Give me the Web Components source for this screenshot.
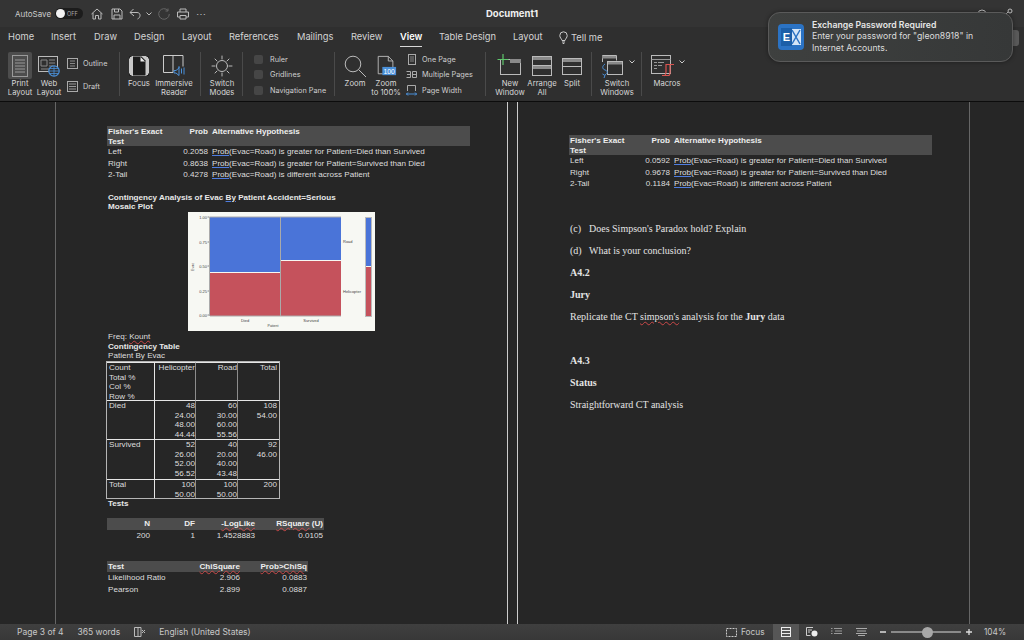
<!DOCTYPE html>
<html>
<head>
<meta charset="utf-8">
<title>Document1</title>
<style>
  html, body { margin: 0; height: 100%; overflow: hidden; background: #262626; }
  body { font-family: Inter, "Liberation Sans", sans-serif; color: #ddd; }
  word-app { width: 1024px; height: 640px; }
</style>
</head>
<body>
<word-app>
  <word-titlebar title-text="Document1"></word-titlebar>
  <word-tabs></word-tabs>
  <word-ribbon>
    <ribbon-group style="width:120px;padding-left:8px">
      <ribbon-btn w="24" active label="Print|Layout"><svg width="20" height="24" viewBox="0 0 20 24" fill="none" stroke="#9a9a9a"><rect x="2.5" y="1.5" width="15" height="21"/><path d="M5 6h10M5 9h10M5 12h10M5 15h10M5 18h10"/></svg></ribbon-btn>
      <ribbon-btn w="34" label="Web|Layout"><svg width="26" height="24" viewBox="0 0 26 24" fill="none" stroke="#bbb"><rect x="2.5" y="2.5" width="19" height="15"/><path d="M5 6h6v6H5zM13 6h6M13 9h6M13 12h4M5 15h8" stroke="#888"/><circle cx="18" cy="17" r="5.2" fill="#2f2f2f" stroke="#4a90d9" stroke-width="1.2"/><path d="M12.8 17h10.4M18 11.8v10.4M14 14.5h8M14 19.5h8" stroke="#4a90d9" stroke-width=".8"/></svg></ribbon-btn>
      <ribbon-stack gap="13" top="6" style="margin-left:1px">
        <ribbon-item label="Outline"><svg width="11" height="11" viewBox="0 0 11 11" fill="none" stroke="#aaa"><rect x=".5" y=".5" width="10" height="10"/><path d="M3 3h5M3 5.5h5M3 8h5" stroke="#888"/></svg></ribbon-item>
        <ribbon-item label="Draft"><svg width="11" height="11" viewBox="0 0 11 11" fill="none" stroke="#aaa"><rect x=".5" y=".5" width="10" height="10"/><path d="M2 3h7M2 5.5h7M2 8h7" stroke="#999"/></svg></ribbon-item>
      </ribbon-stack>
    </ribbon-group>
    <ribbon-group style="width:81px;padding-left:1px">
      <ribbon-btn w="36" label="Focus"><svg width="22" height="22" viewBox="0 0 22 22"><rect x="1" y="1" width="20" height="20" fill="#c8c8c8"/><path d="M5 1.500h8.500l4 4V20.500H5z" fill="#1d1d1d"/><path d="M12.500 2v4.500H17z" fill="#eee"/><path d="M1 1h2.500v1H2v1.500H1zM18.500 1H21v2.500h-1V2h-1.500zM1 18.500h1V20h1.500v1H1zM20 18.500h1V21h-2.500v-1H20z" fill="#222"/></svg></ribbon-btn>
      <ribbon-btn w="34" label="Immersive|Reader"><svg width="26" height="24" viewBox="0 0 26 24" fill="none" stroke="#ccc"><path d="M12 18.500H2.500V1.500h9.500zM12 1.500h10v11"/><path d="M15 16.500l3-2.500v-1.500 9l-3-2.500h-2v-2.500z" stroke="#4a90d9"/><path d="M20.500 14.500v5M23 13.500v7" stroke="#4a90d9"/></svg></ribbon-btn>
    </ribbon-group>
    <ribbon-group style="width:42px">
      <ribbon-btn w="42" label="Switch|Modes"><svg width="24" height="24" viewBox="0 0 24 24" fill="none" stroke="#bbb" stroke-linecap="round"><circle cx="12" cy="12" r="5.500"/><path d="M12 2v3M12 19v3M2 12h3M19 12h3M5 5l2 2M17 17l2 2M19 5l-2 2M7 17l-2 2"/></svg></ribbon-btn>
    </ribbon-group>
    <ribbon-group style="width:92px;padding-left:11px">
      <ribbon-stack gap="5.500" top="2">
        <ribbon-item check label="Ruler"></ribbon-item>
        <ribbon-item check label="Gridlines"></ribbon-item>
        <ribbon-item check label="Navigation Pane"></ribbon-item>
      </ribbon-stack>
    </ribbon-group>
    <ribbon-group style="width:151px">
      <ribbon-btn w="40" label="Zoom"><svg width="24" height="24" viewBox="0 0 24 24" fill="none" stroke="#bbb"><circle cx="10" cy="10" r="7.800"/><path d="M15.500 15.500l7.500 7.500"/></svg></ribbon-btn>
      <ribbon-btn w="22" label="Zoom|to 100%"><svg width="24" height="24" viewBox="0 0 24 24" fill="none" stroke="#bbb"><path d="M3.500 20.500V1.500h11l5 5v7M14.500 1.500v5h5M3.500 20.500h5"/><rect x="8" y="13" width="15" height="9" fill="#4a90d9" stroke="none"/><text x="15.500" y="20.500" fill="#fff" stroke="none" font-family="Liberation Sans" font-size="7.500" text-anchor="middle">100</text></svg></ribbon-btn>
      <ribbon-stack gap="5.500" top="2" style="margin-left:9px">
        <ribbon-item label="One Page"><svg width="10" height="11" viewBox="0 0 10 11" fill="none" stroke="#aaa"><rect x="1.500" y=".5" width="7" height="10"/><path d="M3 3h4M3 5h4M3 7h4" stroke="#888"/></svg></ribbon-item>
        <ribbon-item label="Multiple Pages"><svg width="11" height="9" viewBox="0 0 11 9" fill="none" stroke="#aaa"><path d="M.5 1.500h4v6h-4M6.500 1.500h4v6h-4zM1 4.500h3M7 4.500h3" /></svg></ribbon-item>
        <ribbon-item label="Page Width"><svg width="11" height="11" viewBox="0 0 11 11" fill="none"><path d="M1.500 6V.5h8V6" stroke="#aaa"/><path d="M0 9h11M2 7.500L.5 9 2 10.500M9 7.500L10.500 9 9 10.500" stroke="#4a90d9"/></svg></ribbon-item>
      </ribbon-stack>
    </ribbon-group>
    <ribbon-group style="width:106px;padding-left:8px">
      <ribbon-btn w="32" label="New|Window"><svg width="26" height="24" viewBox="0 0 26 24" fill="none"><rect x="3.500" y="5.500" width="20" height="15" stroke="#bbb"/><rect x="13" y="5" width="11" height="4" fill="#8a8a8a"/><path d="M6 0v11M.5 5.500h11" stroke="#5fc76d" stroke-width="1.200"/></svg></ribbon-btn>
      <ribbon-btn w="32" label="Arrange|All"><svg width="22" height="24" viewBox="0 0 22 24" fill="none" stroke="#bbb"><rect x="1.500" y="2.500" width="19" height="19"/><rect x="2" y="3" width="18" height="3" fill="#8a8a8a" stroke="none"/><rect x="2" y="12" width="18" height="3" fill="#8a8a8a" stroke="none"/><path d="M1.500 11.500h19"/></svg></ribbon-btn>
      <ribbon-btn w="28" label="Split"><svg width="22" height="24" viewBox="0 0 22 24" fill="none" stroke="#bbb"><rect x="1.500" y="4.500" width="19" height="16"/><rect x="2" y="5" width="18" height="3" fill="#8a8a8a" stroke="none"/><path d="M1.500 12.500h19"/></svg></ribbon-btn>
    </ribbon-group>
    <ribbon-group style="width:50px">
      <ribbon-btn w="50" caret label="Switch|Windows"><svg width="26" height="24" viewBox="0 0 26 24" fill="none" stroke="#bbb"><path d="M2.500 8V1.500h14v5"/><rect x="2" y="2" width="14" height="2.500" fill="#8a8a8a" stroke="none"/><rect x="7.500" y="7.500" width="15" height="13"/><rect x="8" y="8" width="14" height="2.500" fill="#8a8a8a" stroke="none"/><path d="M4 12c-3 2-3 5 0 6s3 3 0 5M1.500 22l2.500 1.500-1 2.500" stroke="#4a90d9" transform="translate(1 -2)"/></svg></ribbon-btn>
    </ribbon-group>
    <ribbon-group style="width:50px;border:none">
      <ribbon-btn w="50" caret label="Macros"><svg width="26" height="24" viewBox="0 0 26 24" fill="none" stroke="#bbb"><rect x="1.500" y="1.500" width="19" height="18"/><path d="M1.500 5.500h19M4 8.500h3M8 8.500h6M4 11.500h3M8 11.500h4M4 14.500h3" stroke="#999"/><path d="M12 21.500h7c1-1 1-2 1-3V10.500h4M15 21c1-1 1-2 1-3v-7.500h5" stroke="#d9534f" stroke-width="1.200"/></svg></ribbon-btn>
    </ribbon-group>
  </word-ribbon>
  <word-document>
    <doc-page side="left" style="padding-top:24px">
      <stat-table style="--cols:71px 31px 1fr;--row:11.500px">
        <span class="h">Fisher's Exact<br>Test</span><span class="h r">Prob</span><span class="h alt">Alternative Hypothesis</span>
        <span>Left</span><span class="r">0.2058</span><span class="alt"><spell-mark kind="grammar">Prob</spell-mark>(Evac=Road) is greater for Patient=Died than Survived</span>
        <span>Right</span><span class="r">0.8638</span><span class="alt"><spell-mark kind="grammar">Prob</spell-mark>(Evac=Road) is greater for Patient=Survived than Died</span>
        <span>2-Tail</span><span class="r">0.4278</span><span class="alt"><spell-mark kind="grammar">Prob</spell-mark>(Evac=Road) is different across Patient</span>
      </stat-table>
      <report-text bold style="margin-top:12px">Contingency Analysis of Evac <spell-mark kind="grammar">By</spell-mark> Patient Accident=Serious</report-text>
      <report-text bold>Mosaic Plot</report-text>
      <mosaic-plot></mosaic-plot>
      <report-text style="margin-top:1px">Freq: <spell-mark kind="spell">Kount</spell-mark></report-text>
      <report-text bold>Contingency Table</report-text>
      <report-text>Patient By Evac</report-text>
      <cross-table>
        <span class="a">Count<br>Total %<br>Col %<br>Row %</span><span class="r">Helicopter</span><span class="r">Road</span><span class="r e">Total</span>
        <span class="a">Died</span><span class="r">48<br>24.00<br>48.00<br>44.44</span><span class="r">60<br>30.00<br>60.00<br>55.56</span><span class="r e">108<br>54.00</span>
        <span class="a">Survived</span><span class="r">52<br>26.00<br>52.00<br>56.52</span><span class="r">40<br>20.00<br>40.00<br>43.48</span><span class="r e">92<br>46.00</span>
        <span class="a">Total</span><span class="r">100<br>50.00</span><span class="r">100<br>50.00</span><span class="r e">200</span>
      </cross-table>
      <report-text bold>Tests</report-text>
      <stat-table style="--cols:44px 45px 60px 68px;--row:12px;width:217px;margin-top:9px">
        <span class="h r c">N</span><span class="h r c">DF</span><span class="h r c"><spell-mark kind="spell">-LogLike</spell-mark></span><span class="h r c"><spell-mark kind="spell">RSquare</spell-mark> (U)</span>
        <span class="r c">200</span><span class="r c">1</span><span class="r c">1.4528883</span><span class="r c">0.0105</span>
      </stat-table>
      <stat-table style="--cols:70px 64px 67px;--row:11.500px;width:201px;margin-top:19px">
        <span class="h c">Test</span><span class="h r c"><spell-mark kind="spell">ChiSquare</spell-mark></span><span class="h r c"><spell-mark kind="spell">Prob&gt;ChiSq</spell-mark></span>
        <span class="c">Likelihood Ratio</span><span class="r c">2.906</span><span class="r c">0.0883</span>
        <span class="c">Pearson</span><span class="r c">2.899</span><span class="r c">0.0887</span>
      </stat-table>
    </doc-page>
    <doc-page side="right" style="padding-top:33px">
      <stat-table style="--cols:71px 31px 1fr;--row:11.500px">
        <span class="h">Fisher's Exact<br>Test</span><span class="h r">Prob</span><span class="h alt">Alternative Hypothesis</span>
        <span>Left</span><span class="r">0.0592</span><span class="alt"><spell-mark kind="grammar">Prob</spell-mark>(Evac=Road) is greater for Patient=Died than Survived</span>
        <span>Right</span><span class="r">0.9678</span><span class="alt"><spell-mark kind="grammar">Prob</spell-mark>(Evac=Road) is greater for Patient=Survived than Died</span>
        <span>2-Tail</span><span class="r">0.1184</span><span class="alt"><spell-mark kind="grammar">Prob</spell-mark>(Evac=Road) is different across Patient</span>
      </stat-table>
      <body-para marker="(c)" style="margin-top:28px">Does Simpson's Paradox hold? Explain</body-para>
      <body-para marker="(d)">What is your conclusion?</body-para>
      <body-para bold>A4.2</body-para>
      <body-para bold>Jury</body-para>
      <body-para>Replicate the CT <spell-mark kind="spell">simpson's</spell-mark> analysis for the <b>Jury</b> data</body-para>
      <body-para></body-para>
      <body-para bold>A4.3</body-para>
      <body-para bold>Status</body-para>
      <body-para>Straightforward CT analysis</body-para>
    </doc-page>
  </word-document>
  <word-status></word-status>
  <notify-toast heading="Exchange Password Required">Enter your password for "gleon8918" in<br>Internet Accounts.</notify-toast>
</word-app>

<script>
function shadowed(name, html) {
  customElements.define(name, class extends HTMLElement {
    constructor() {
      super();
      this.attachShadow({ mode: 'open' }).innerHTML = html;
    }
  });
}

shadowed('word-app', `<style>:host{display:flex;flex-direction:column;position:relative;overflow:hidden}</style><slot></slot>`);

class WordTitlebar extends HTMLElement {
  constructor() {
    super();
    this.attachShadow({ mode: 'open' }).innerHTML = `
      <style>
        :host { display: flex; align-items: center; height: 27px; background: #343434; padding-left: 15px; position: relative; flex: none; }
        .auto { font-size: 8px; color: #ccc; width: 40px; }
        .toggle { width: 28px; height: 11px; border-radius: 6px; background: #1c1c1c; display: flex; align-items: center; }
        .toggle i { width: 9px; height: 9px; border-radius: 50%; background: #f2f2f2; margin-left: 1px; }
        .toggle span { font-size: 5.500px; color: #aaa; margin-left: 2px; }
        .qa { display: flex; align-items: center; margin-left: 8px; }
        .title { position: absolute; left: 0; right: 0; top: 0; line-height: 27px; text-align: center; font-size: 9.500px; font-weight: 700; color: #f0f0f0; }
        .more { color: #bbb; font-size: 10px; margin-left: 7px; }
        .right { position: absolute; left: 976px; top: 8px; display: flex; gap: 14px; }
      </style>
      <span class="auto">AutoSave</span>
      <div class="toggle"><i></i><span>OFF</span></div>
      <div class="qa">
        <svg width="12" height="12" viewBox="0 0 12 12" fill="none" stroke="#bbb"><path d="M.5 6L6 1l5.500 5M2 5v6h2.500V7.500h3V11H10V5"/></svg>
        <svg width="12" height="12" viewBox="0 0 12 12" fill="none" stroke="#bbb" style="margin-left:8px"><path d="M1 1h8l2 2v8H1zM3.500 1v3h4V1M3 11V7h6v4"/></svg>
        <svg width="13" height="12" viewBox="0 0 13 12" fill="none" stroke="#bbb" style="margin-left:6px"><path d="M1 4.500h7c4 0 4 5 .5 6.500M1 4.500L4.500 1M1 4.500L5 8"/></svg>
        <svg width="6" height="4" viewBox="0 0 6 4" fill="none" stroke="#bbb" style="margin-left:4px"><path d="M.5.5L3 3 5.500.5"/></svg>
        <svg width="12" height="12" viewBox="0 0 12 12" fill="none" stroke="#666" style="margin-left:6px"><path d="M10 2.500A5.300 5.300 0 1 0 11.300 6M10 .5v2.500H7.500"/></svg>
        <svg width="12" height="12" viewBox="0 0 12 12" fill="none" stroke="#bbb" style="margin-left:7px"><path d="M3 4V1h6v3M3 9H.5V4h11v5H9M3 7.500h6V11H3z"/></svg>
        <span class="more">&#8943;</span>
      </div>
      <div class="title">${this.getAttribute('title-text')}</div>
      <div class="right">
        <svg width="12" height="12" viewBox="0 0 12 12" fill="none" stroke="#bbb"><circle cx="6" cy="6" r="4"/></svg>
        <svg width="12" height="12" viewBox="0 0 12 12" fill="none" stroke="#bbb"><circle cx="8" cy="3" r="2"/><circle cx="3" cy="8" r="2"/><path d="M6 4l-2 2"/></svg>
      </div>`;
  }
}
customElements.define('word-titlebar', WordTitlebar);

class WordTabs extends HTMLElement {
  constructor() {
    super();
    // left edge of each tab
    const tabs = [['Home',8],['Insert',51],['Draw',94],['Design',134],['Layout',182],['References',229],['Mailings',297],['Review',351],['View',400],['Table Design',439],['Layout',513]];
    const html = tabs.map(([t, x], i) => {
      const next = i < tabs.length - 1 ? tabs[i + 1][1] : 559;
      return `<a class="${t === 'View' ? 'on' : ''}" style="width:${next - x}px"><span>${t}</span></a>`;
    }).join('');
    this.attachShadow({ mode: 'open' }).innerHTML = `
      <style>
        :host { display: flex; height: 23px; background: #2f2f2f; padding-left: 8px; font-size: 9.300px; color: #d4d4d4; flex: none; position: relative; }
        a { display: block; flex: none; }
        a span { display: inline-block; line-height: 20px; height: 20px; box-sizing: border-box; }
        a.on span { color: #fff; font-weight: 600; border-bottom: 1.500px solid #d8d8d8; }
        .tell { display: flex; align-items: center; gap: 3px; height: 20px; }
        .share { position: absolute; left: 1005px; top: 3px; width: 14px; height: 16px; border-radius: 3px; background: #5a5a5a; }
      </style>
      ${html}
      <div class="tell"><svg width="9" height="13" viewBox="0 0 9 13" fill="none" stroke="#ccc"><path d="M3 9.500C2.500 7.500.8 6.800.8 4.500a3.700 3.700 0 0 1 7.400 0c0 2.300-1.700 3-2.200 5zM3 11h3M3.700 12.500h1.600"/></svg><span>Tell me</span></div>
      <div class="share"></div>`;
  }
}
customElements.define('word-tabs', WordTabs);

shadowed('word-ribbon', `<style>:host{display:flex;background:#2f2f2f;border-bottom:1px solid #0c0c0c;box-sizing:border-box;flex:none;height:52px}</style><slot></slot>`);

shadowed('ribbon-group', `<style>:host{display:flex;box-sizing:border-box;flex:none;border-right:1px solid #4a4a4a;height:44px;margin-top:2px;align-items:flex-start}</style><slot></slot>`);

class RibbonBtn extends HTMLElement {
  constructor() {
    super();
    const lines = this.getAttribute('label').split('|').join('<br>');
    const caret = this.hasAttribute('caret')
      ? `<svg class="caret" width="6" height="4" viewBox="0 0 6 4" fill="none" stroke="#ccc"><path d="M.5.5L3 3 5.500.5"/></svg>` : '';
    this.attachShadow({ mode: 'open' }).innerHTML = `
      <style>
        :host { display: flex; flex-direction: column; align-items: center; flex: none; width: ${this.getAttribute('w')}px; height: 46px; }
        .icon { height: 27px; width: 100%; display: flex; align-items: center; justify-content: center; gap: 3px; }
        :host([active]) .icon { background: #4d4d4d; border-radius: 2px; }
        .lbl { font-size: 7.700px; line-height: 9px; text-align: center; white-space: nowrap; color: #d8d8d8; }
        .caret { margin-bottom: 8px; }
      </style>
      <div class="icon"><slot></slot>${caret}</div>
      <div class="lbl">${lines}</div>`;
  }
}
customElements.define('ribbon-btn', RibbonBtn);

class RibbonStack extends HTMLElement {
  constructor() {
    super();
    this.attachShadow({ mode: 'open' }).innerHTML = `<style>:host{display:flex;flex-direction:column;gap:${this.getAttribute('gap')}px;padding-top:${this.getAttribute('top')}px;flex:none}</style><slot></slot>`;
  }
}
customElements.define('ribbon-stack', RibbonStack);

class RibbonItem extends HTMLElement {
  constructor() {
    super();
    const box = this.hasAttribute('check') ? '<i></i>' : '<span class="ic"><slot></slot></span>';
    this.attachShadow({ mode: 'open' }).innerHTML = `
      <style>
        :host { display: flex; align-items: center; height: 10px; font-size: 7.300px; color: #d0d0d0; white-space: nowrap; }
        i { width: 9px; height: 9px; border-radius: 2px; background: #464646; margin-right: 7px; }
        .ic { width: 11px; height: 11px; display: flex; align-items: center; justify-content: center; margin-right: 5px; }
      </style>
      ${box}<span>${this.getAttribute('label')}</span>`;
  }
}
customElements.define('ribbon-item', RibbonItem);

shadowed('word-document', `<style>:host{display:flex;flex:1;min-height:0;gap:9px;padding-left:55px;background:#262626;overflow:hidden}</style><slot></slot>`);

shadowed('doc-page', `<style>
  :host { display: block; box-sizing: border-box; width: 453px; height: 100%; padding: 0 37px 0 51px; font-family: "Liberation Sans", Arial, sans-serif; font-size: 8.100px; color: #dedede; }
  :host([side=left]) { border-left: 1px solid #666; border-right: 1px solid #ccc; }
  :host([side=right]) { border-left: 1px solid #ccc; border-right: 1px solid #666; }
</style><slot></slot>`);

shadowed('spell-mark', `<style>
  :host { text-decoration: underline; text-underline-offset: 1px; }
  :host([kind=grammar]) { text-decoration-color: #4f7de0; text-decoration-thickness: 1px; }
  :host([kind=spell]) { text-decoration: underline wavy #c94848; text-decoration-thickness: .7px; }
</style><slot></slot>`);

shadowed('stat-table', `<style>
  :host { display: grid; grid-template-columns: var(--cols); width: 363px; }
  ::slotted(*) { padding: 1px 1px 0; line-height: 10.500px; min-height: var(--row); box-sizing: border-box; white-space: nowrap; }
  ::slotted(.h) { background: #4c4c4c; font-weight: 700; padding-top: 1px; line-height: 9.500px; color: #eee; }
  ::slotted(.r) { text-align: right; }
  ::slotted(.c) { line-height: 11.500px; padding-top: 0; }
  ::slotted(.alt) { padding-left: 3px; }
</style><slot></slot>`);

shadowed('report-text', `<style>
  :host { display: block; line-height: 9.700px; padding-left: 1px; white-space: nowrap; }
  :host([bold]) { font-weight: 700; color: #e8e8e8; }
</style><slot></slot>`);

shadowed('cross-table', `<style>
  :host { display: grid; grid-template-columns: 48px 41px 42px 41px; grid-template-rows: 38px 39px 40px 19px; width: 174px; box-sizing: border-box; margin-left: -1px; border: 1px solid #b5b5b5; line-height: 9.700px; }
  ::slotted(*) { padding: 0 0 0 2px; border-right: 1px solid #8c8c8c; border-top: 1px solid #e6e6e6; white-space: nowrap; }
  ::slotted(.a) { border-right: 1px solid #e6e6e6; }
  ::slotted(.r) { text-align: right; }
  ::slotted(.e) { border-right: none; padding-right: 2px; }
</style><slot></slot>`);

class MosaicPlot extends HTMLElement {
  constructor() {
    super();
    const ticks = [['1.00', 216], ['0.75', 241], ['0.50', 265], ['0.25', 290], ['0.00', 314]];
    const labels = ticks.map(([t, y]) => `<text x="19" y="${y - 211 + 1.500}" text-anchor="end">${t}</text><path d="M19.500 ${y - 211}h2" stroke="#888"/>`).join('');
    this.attachShadow({ mode: 'open' }).innerHTML = `
      <style>:host { display: block; width: 187px; height: 119px; margin-left: 81px; } svg { display: block; }</style>
      <svg width="187" height="119" viewBox="0 0 187 119" font-family="Liberation Sans" font-size="4" fill="#444">
        <rect width="187" height="119" fill="#f7f8f3"/>
        ${labels}
        <rect x="22" y="5" width="70" height="55" fill="#4a74d8"/>
        <rect x="22" y="61" width="70" height="43" fill="#c5525c"/>
        <rect x="93" y="5" width="60" height="43" fill="#4a74d8"/>
        <rect x="93" y="49" width="60" height="55" fill="#c5525c"/>
        <path d="M22 5h131M22 104h131M21.500 5v99M92.500 5v99" stroke="#aaa" fill="none"/>
        <text x="57" y="110" text-anchor="middle">Died</text>
        <text x="123" y="110" text-anchor="middle">Survived</text>
        <text x="85" y="115" text-anchor="middle" font-size="3.500">Patient</text>
        <text x="155" y="31">Road</text>
        <text x="155" y="80.500">Helicopter</text>
        <text transform="translate(6 55) rotate(-90)" text-anchor="middle" font-size="3.500">Evac</text>
        <rect x="177.500" y="5.500" width="6" height="99" fill="none" stroke="#bbb"/>
        <rect x="178" y="6" width="5" height="48" fill="#4a74d8"/>
        <rect x="178" y="55" width="5" height="49" fill="#c5525c"/>
      </svg>`;
  }
}
customElements.define('mosaic-plot', MosaicPlot);

class BodyPara extends HTMLElement {
  constructor() {
    super();
    const m = this.getAttribute('marker');
    this.attachShadow({ mode: 'open' }).innerHTML = `
      <style>
        :host { display: flex; height: 22px; align-items: center; font-family: "Liberation Serif", "Times New Roman", serif; font-size: 10px; color: #e4e4e4; padding-left: 1px; white-space: nowrap; }
        :host([bold]) { font-weight: 700; }
        .m { width: 19px; flex: none; }
      </style>
      ${m ? `<span class="m">${m}</span>` : ''}<span><slot></slot></span>`;
  }
}
customElements.define('body-para', BodyPara);

shadowed('word-status', `
  <style>
    :host { display: flex; align-items: center; height: 16px; background: linear-gradient(#3f3f3f, #383838); font-size: 8.500px; color: #c8c8c8; flex: none; padding-left: 17px; }
    .w { margin-left: 14px; }
    .spell { margin: 0 13px 0 14px; display: flex; }
    .right { margin-left: auto; display: flex; align-items: center; height: 100%; font-size: 8.300px; }
    .focus { display: flex; align-items: center; gap: 4px; width: 47px; flex: none; }
    .views { display: flex; align-items: center; height: 100%; flex: none; }
    .views div { width: 25px; height: 100%; display: flex; align-items: center; justify-content: center; }
    .views div.on { background: #565656; width: 26px; }
    .zoom { display: flex; align-items: center; margin-left: 6px; flex: none; }
    .track { width: 70px; height: 2px; background: #8a8a8a; position: relative; margin: 0 5px; flex: none; }
    .track i { position: absolute; left: 31px; top: -4.500px; width: 11px; height: 11px; border-radius: 50%; background: #a8a8a8; }
    .pct { width: 40px; margin-left: 12px; box-sizing: border-box; flex: none; }
  </style>
  <span>Page 3 of 4</span>
  <span class="w">365 words</span>
  <span class="spell"><svg width="12" height="10" viewBox="0 0 12 10" fill="none" stroke="#bbb"><path d="M7 .5H.5v9H7V.5M4 .5v9M8 3l3 3M11 3L8 6"/></svg></span>
  <span>English (United States)</span>
  <div class="right">
    <div class="focus"><svg width="11" height="9" viewBox="0 0 11 9" fill="none" stroke="#ccc"><rect x=".5" y=".5" width="10" height="8" stroke-dasharray="2 1"/></svg><span>Focus</span></div>
    <div class="views">
      <div class="on"><svg width="10" height="10" viewBox="0 0 10 10" fill="none" stroke="#eee"><rect x=".5" y=".5" width="9" height="9"/><path d="M1 3.500h8M1 6.500h8"/></svg></div>
      <div><svg width="12" height="10" viewBox="0 0 12 10" fill="none" stroke="#ccc"><path d="M7 .5H.5v8h4M2 3h4M2 5h2"/><circle cx="8.500" cy="6.500" r="3" fill="#eee" stroke="none"/></svg></div>
      <div><svg width="11" height="8" viewBox="0 0 11 8" fill="none" stroke="#999"><path d="M3 .5h8M4 3h7M3 5.500h8M0 .5h1.500M0 3h1.500M0 5.500h1.500"/></svg></div>
      <div><svg width="11" height="8" viewBox="0 0 11 8" fill="none" stroke="#aaa"><path d="M0 .5h11M1 3h9M0 5.500h11M2 7.500h7"/></svg></div>
    </div>
    <div class="zoom"><svg width="6" height="2" viewBox="0 0 6 2"><path d="M0 1h6" stroke="#ddd" stroke-width="1.500"/></svg><div class="track"><i></i></div><svg width="6" height="6" viewBox="0 0 6 6"><path d="M0 3h6M3 0v6" stroke="#ddd" stroke-width="1.300"/></svg></div>
    <span class="pct">104%</span>
  </div>`);

class NotifyToast extends HTMLElement {
  constructor() {
    super();
    this.attachShadow({ mode: 'open' }).innerHTML = `
      <style>
        :host { position: absolute; left: 768px; top: 12px; width: 245px; height: 50px; box-sizing: border-box; border: 1px solid #5a5a5a; border-radius: 12px; background: linear-gradient(90deg, #3e403f, #363838); display: flex; align-items: center; padding: 0 8px 0 9px; gap: 8px; font-size: 8.700px; line-height: 11.500px; color: #dcdcdc; box-shadow: 0 0 4px rgba(0,0,0,.4); white-space: nowrap; }
        .icon { flex: none; width: 26px; height: 26px; border-radius: 4px; background: #2b73c4; display: flex; }
        b { font-weight: 600; display: block; color: #e6e6e6; }
      </style>
      <svg class="icon" viewBox="0 0 26 26"><rect x="13" y="5" width="10" height="16" fill="#d6e6f7"/><path d="M14 6l8 14M22 6l-8 14" stroke="#2b73c4" stroke-width="1.500"/><rect x="3" y="4" width="11" height="18" fill="#1c5fa8"/><text x="8.500" y="17" fill="#fff" font-family="Liberation Sans" font-weight="700" font-size="11" text-anchor="middle">E</text></svg>
      <div><b>${this.getAttribute('heading')}</b><slot></slot></div>`;
  }
}
customElements.define('notify-toast', NotifyToast);
</script>
</body>
</html>
